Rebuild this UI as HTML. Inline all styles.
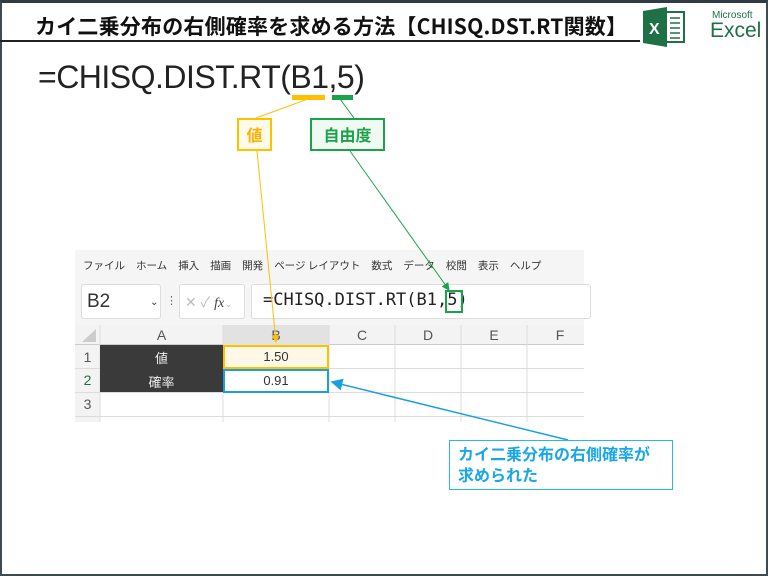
<!DOCTYPE html>
<html><head><meta charset="utf-8"><style>
*{margin:0;padding:0;box-sizing:border-box}
body{width:768px;height:576px;position:relative;background:#fff;font-family:"Liberation Sans","Noto Sans CJK JP",sans-serif;overflow:hidden}
.frame{position:absolute;left:0;top:0;width:768px;height:576px;border:2px solid #3d4a50;border-top:3px solid #2f3b45}
.a{position:absolute}
.jp{font-family:"Noto Sans CJK JP",sans-serif}
.rib span{margin-right:11px}
.cell{position:absolute;font-size:13px;color:#333;text-align:center}
</style></head><body>
<div class="frame"></div>
<div class="a jp" style="left:35px;top:11px;font-size:21px;font-weight:bold;color:#111;letter-spacing:0.2px;white-space:nowrap">カイ二乗分布の右側確率を求める方法【CHISQ.DST.RT関数】</div>
<div class="a" style="left:0;top:40px;width:640px;height:2px;background:#222"></div>
<svg class="a" style="left:640px;top:6px" width="50" height="42" viewBox="0 0 50 42">
<rect x="16" y="6" width="28" height="30" fill="#fff" stroke="#1e7145" stroke-width="2"/>
<g stroke="#1e7145" stroke-width="1.5"><line x1="30" y1="12" x2="40" y2="12"/><line x1="30" y1="17" x2="40" y2="17"/><line x1="30" y1="22" x2="40" y2="22"/><line x1="30" y1="27" x2="40" y2="27"/><line x1="30" y1="32" x2="40" y2="32"/></g>
<path d="M3 5 L27 1 L27 41 L3 37 Z" fill="#1e7145"/>
<text x="9" y="28" font-family="Liberation Sans" font-weight="bold" font-size="16" fill="#fff">X</text>
</svg>
<div class="a" style="left:712px;top:10px;font-size:10px;color:#1e7145">Microsoft</div>
<div class="a" style="left:710px;top:19px;font-size:21px;color:#1e7145">Excel</div>
<div class="a" style="left:38px;top:59px;font-size:32px;color:#222;letter-spacing:-0.5px">=CHISQ.DIST.RT(B1,5)</div>
<div class="a" style="left:292px;top:95px;width:33px;height:5px;background:#ffc000"></div>
<div class="a" style="left:332px;top:95px;width:21px;height:5px;background:#1aa34a"></div>
<div class="a jp" style="left:237px;top:118px;width:35px;height:33px;border:2px solid #ffc000;background:#fffbea;color:#ffb000;font-weight:bold;font-size:16px;text-align:center;line-height:29px">値</div>
<div class="a jp" style="left:310px;top:118px;width:75px;height:33px;border:2px solid #1aa34a;background:#f0faf3;color:#1aa34a;font-weight:bold;font-size:16px;text-align:center;line-height:29px">自由度</div>
<div class="a" style="left:75px;top:250px;width:509px;height:172px;background:#f5f5f5"></div>
<div class="a jp rib" style="left:83px;top:258px;font-size:10.5px;color:#333;white-space:nowrap"><span>ファイル</span><span>ホーム</span><span>挿入</span><span>描画</span><span>開発</span><span>ページ レイアウト</span><span>数式</span><span>データ</span><span>校閲</span><span>表示</span><span>ヘルプ</span></div>
<div class="a" style="left:81px;top:284px;width:80px;height:35px;background:#fff;border:1px solid #ddd;border-radius:3px;font-size:19px;color:#333;padding:6px 0 0 5px">B2<span style="font-size:10px;position:absolute;left:68px;top:12px">⌄</span></div>
<div class="a" style="left:166px;top:294px;font-size:11px;color:#666">⋮</div>
<div class="a" style="left:179px;top:284px;width:66px;height:35px;background:#fff;border:1px solid #ddd;border-radius:3px;font-size:14px;color:#bbb;padding:7px 0 0 5px">✕ ✓ <i style="font-family:'Liberation Serif';color:#444">fx</i><span style="font-size:10px">⌄</span></div>
<div class="a" style="left:251px;top:284px;width:340px;height:35px;background:#fff;border:1px solid #ddd;border-radius:3px"></div>
<div class="a" style="left:263px;top:290px;font-family:'DejaVu Sans Mono',monospace;font-size:17px;color:#222">=CHISQ.DIST.RT(B1,5)</div>
<div class="a" style="left:445px;top:290px;width:18px;height:23px;border:2px solid #1aa34a"></div>
<div class="a" style="left:75px;top:325px;width:509px;height:97px;background:#fff"></div>
<div class="a" style="left:75px;top:325px;width:509px;height:20px;background:#f3f3f3;border-bottom:1px solid #ccc"></div>
<div class="a" style="left:223px;top:325px;width:106px;height:20px;background:#e2e2e2"></div>
<div class="a" style="left:75px;top:345px;width:25px;height:77px;background:#f3f3f3"></div>
<svg class="a" style="left:80px;top:328px" width="18" height="15"><path d="M16 1 L16 14 L2 14 Z" fill="#ccc"/></svg>
<div class="cell" style="left:100px;top:327px;width:123px;font-size:14px;color:#555">A</div>
<div class="cell" style="left:223px;top:327px;width:106px;font-size:14px;color:#555">B</div>
<div class="cell" style="left:329px;top:327px;width:66px;font-size:14px;color:#555">C</div>
<div class="cell" style="left:395px;top:327px;width:66px;font-size:14px;color:#555">D</div>
<div class="cell" style="left:461px;top:327px;width:66px;font-size:14px;color:#555">E</div>
<div class="cell" style="left:527px;top:327px;width:66px;font-size:14px;color:#555">F</div>
<svg class="a" style="left:75px;top:325px" width="509" height="97"><g stroke="#dcdcdc" stroke-width="1">
<line x1="25" y1="0" x2="25" y2="97"/><line x1="148" y1="0" x2="148" y2="97"/><line x1="254" y1="0" x2="254" y2="97"/><line x1="320" y1="0" x2="320" y2="97"/><line x1="386" y1="0" x2="386" y2="97"/><line x1="452" y1="0" x2="452" y2="97"/>
<line x1="0" y1="43.5" x2="509" y2="43.5"/><line x1="0" y1="67.5" x2="509" y2="67.5"/><line x1="0" y1="91.5" x2="509" y2="91.5"/></g></svg>
<div class="cell" style="left:75px;top:349px;width:25px;font-size:14px;color:#555">1</div>
<div class="cell" style="left:75px;top:372px;width:25px;font-size:14px;color:#1e7145">2</div>
<div class="cell" style="left:75px;top:396px;width:25px;font-size:14px;color:#555">3</div>
<div class="a jp" style="left:100px;top:345px;width:123px;height:47px;background:#3a3a3a"></div>
<div class="cell jp" style="left:100px;top:348px;width:123px;color:#eee">値</div>
<div class="cell jp" style="left:100px;top:372px;width:123px;color:#eee">確率</div>
<div class="a" style="left:223px;top:345px;width:106px;height:24px;border:2px solid #ffc000;background:#fff8e6"></div>
<div class="cell" style="left:223px;top:349px;width:106px">1.50</div>
<div class="a" style="left:223px;top:369px;width:106px;height:24px;border:2px solid #1aa0e0"></div>
<div class="cell" style="left:223px;top:373px;width:106px">0.91</div>
<svg class="a" style="left:0;top:0" width="768" height="576">
<defs>
<marker id="mo" markerWidth="8" markerHeight="8" refX="7" refY="4" orient="auto"><path d="M0 0 L8 4 L0 8 Z" fill="#ffc000"/></marker>
<marker id="mg" markerWidth="8" markerHeight="8" refX="7" refY="4" orient="auto"><path d="M0 0 L8 4 L0 8 Z" fill="#1aa34a"/></marker>
<marker id="mb" markerWidth="8" markerHeight="8" refX="7" refY="4" orient="auto"><path d="M0 0 L8 4 L0 8 Z" fill="#1aa0e0"/></marker>
</defs>
<line x1="308" y1="99" x2="256" y2="118" stroke="#ffc000" stroke-width="1"/>
<line x1="340" y1="99" x2="354" y2="118" stroke="#1aa34a" stroke-width="1"/>
<line x1="257" y1="151" x2="276" y2="342" stroke="#ffc000" stroke-width="1" marker-end="url(#mo)"/>
<line x1="350" y1="151" x2="449" y2="290" stroke="#1aa34a" stroke-width="1" marker-end="url(#mg)"/>
<line x1="568" y1="440" x2="332" y2="382" stroke="#1aa0e0" stroke-width="1.5" marker-end="url(#mb)"/>
</svg>
<div class="a jp" style="left:449px;top:440px;width:224px;height:50px;border:1.5px solid #29b6f0;background:#fff;color:#1aa7e8;font-weight:bold;font-size:16px;line-height:21px;padding:2px 0 0 8px">カイ二乗分布の右側確率が<br>求められた</div>
</body></html>
